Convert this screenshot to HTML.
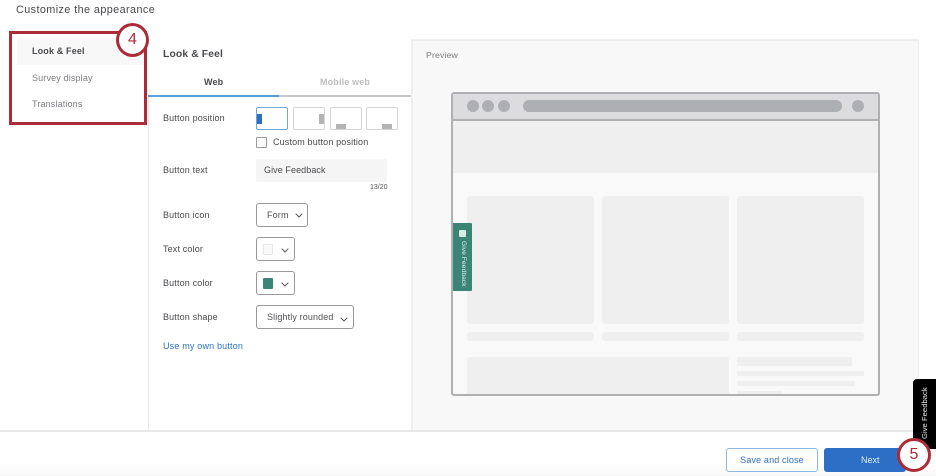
<!DOCTYPE html>
<html>
<head>
<meta charset="utf-8">
<style>
html,body{margin:0;padding:0;background:#fff}
body{width:936px;height:476px;position:relative;overflow:hidden;font-family:"Liberation Sans",sans-serif;color:#525256}
#w{left:0;top:0;width:936px;height:476px;filter:blur(.35px);overflow:hidden}
div,span,a{position:absolute;box-sizing:border-box;white-space:nowrap}
.t{font-size:9px;line-height:12px;letter-spacing:.15px}
.lb{left:163px;color:#4a4a4e}
.pos{top:107px;width:32px;height:23px;border:1px solid #d4d4d6;border-radius:2px;background:#fff}
.sel{left:256px;height:24px;border:1px solid #98989c;border-radius:3px;background:#fff}
.pc{background:#efefef;border-radius:3px}
.dot{width:12px;height:12px;border-radius:50%;background:#aeafb2;top:100px}
.badge{border-radius:50%;background:#fff;border:3px solid #ac2b37;color:#ac2b37;font-size:16px;text-align:center}
</style>
</head>
<body>
<div id="w">
<div style="left:16px;top:3px;font-size:10.8px;line-height:14px;color:#4a4a4e;letter-spacing:.42px">Customize the appearance</div>

<div style="left:148px;top:95px;width:1px;height:337px;background:#e8e8e8"></div>

<div style="left:17px;top:38px;width:127px;height:27px;background:#f8f8f8"></div>
<div class="t" style="left:32px;top:45px;font-weight:bold;color:#4a4a4e">Look &amp; Feel</div>
<div class="t" style="left:32px;top:72px;color:#7d7d82">Survey display</div>
<div class="t" style="left:32px;top:98px;color:#7d7d82">Translations</div>
<div style="left:9px;top:31px;width:138px;height:94px;border:3px solid #ac2b37"></div>
<div class="badge" style="left:116px;top:23px;width:33px;height:34px;line-height:28px">4</div>

<div class="t" style="left:163px;top:49px;font-weight:bold;font-size:10.3px;color:#4a4a4e">Look &amp; Feel</div>
<div class="t" style="left:204px;top:76px;font-weight:bold;color:#4a4a4e">Web</div>
<div class="t" style="left:320px;top:76px;font-weight:bold;color:#bdbdc0">Mobile web</div>
<div style="left:279px;top:95px;width:132px;height:2px;background:#c8c8ca"></div>
<div style="left:148px;top:95px;width:131px;height:2px;background:#5a9fd8"></div>

<div class="t lb" style="top:112px">Button position</div>
<div class="pos" style="left:256px;border-color:#6fa8dc"><span style="left:0;top:6px;width:5px;height:10px;background:#2f6fc2"></span></div>
<div class="pos" style="left:293px"><span style="right:0;top:6px;width:5px;height:10px;background:#b4b4b6"></span></div>
<div class="pos" style="left:330px"><span style="left:5px;bottom:0;width:10px;height:5px;background:#b4b4b6"></span></div>
<div class="pos" style="left:366px"><span style="right:5px;bottom:0;width:10px;height:5px;background:#b4b4b6"></span></div>
<div style="left:256px;top:137px;width:11px;height:11px;border:1px solid #9c9ca0;border-radius:1px;background:#fff"></div>
<div class="t" style="left:273px;top:136px;color:#4a4a4e">Custom button position</div>

<div class="t lb" style="top:164px">Button text</div>
<div style="left:256px;top:159px;width:131px;height:23px;background:#f5f5f5;border-radius:2px"></div>
<div class="t" style="left:264px;top:164px;color:#4a4a4e;letter-spacing:.08px">Give Feedback</div>
<div style="left:370px;top:183px;font-size:7px;line-height:9px;color:#525256">13/20</div>

<div class="t lb" style="top:209px">Button icon</div>
<div class="sel" style="top:203px;width:52px"></div>
<div class="t" style="left:267px;top:209px">Form</div>
<svg style="position:absolute;left:295px;top:213px" width="8" height="5"><path d="M.7.7l3.300 3.300L7.300.7" fill="none" stroke="#55555a" stroke-width="1"/></svg>

<div class="t lb" style="top:243px">Text color</div>
<div class="sel" style="top:237px;width:39px"></div>
<div style="left:263px;top:244px;width:10px;height:11px;background:#fafafa;border:1px solid #e6e6e6;border-radius:1px"></div>
<svg style="position:absolute;left:281px;top:248px" width="8" height="5"><path d="M.7.7l3.300 3.300L7.300.7" fill="none" stroke="#55555a" stroke-width="1"/></svg>

<div class="t lb" style="top:277px">Button color</div>
<div class="sel" style="top:271px;width:39px"></div>
<div style="left:263px;top:278px;width:10px;height:11px;background:#3a8576;border-radius:1px"></div>
<svg style="position:absolute;left:281px;top:282px" width="8" height="5"><path d="M.7.7l3.300 3.300L7.300.7" fill="none" stroke="#55555a" stroke-width="1"/></svg>

<div class="t lb" style="top:311px">Button shape</div>
<div class="sel" style="top:305px;width:98px;height:24px"></div>
<div class="t" style="left:267px;top:311px;letter-spacing:.12px">Slightly rounded</div>
<svg style="position:absolute;left:340px;top:317px" width="8" height="5"><path d="M.7.7l3.300 3.300L7.300.7" fill="none" stroke="#55555a" stroke-width="1"/></svg>

<div class="t" style="left:163px;top:340px;color:#2d72bd;letter-spacing:.18px">Use my own button</div>

<div style="left:411px;top:39px;width:508px;height:393px;background:#f8f8f8;border-top:2px solid #eeeeee;border-left:2px solid #efefef;border-right:1px solid #f0f0f0;border-bottom:2px solid #e6e6e6"></div>
<div class="t" style="left:426px;top:49px;color:#7d7d82;font-size:8.700px">Preview</div>

<div style="left:451px;top:92px;width:429px;height:304px;border:2px solid #b0b0b2;border-radius:3px;background:#f9f9f9"></div>
<div style="left:453px;top:94px;width:425px;height:25px;background:#dcdcde"></div>
<div style="left:453px;top:119px;width:425px;height:2px;background:#b0b0b2"></div>
<div style="left:453px;top:121px;width:425px;height:52px;background:#efefef"></div>
<div class="dot" style="left:467px"></div>
<div class="dot" style="left:482px"></div>
<div class="dot" style="left:498px"></div>
<div style="left:523px;top:100px;width:319px;height:12px;border-radius:6px;background:#aeafb2"></div>
<div class="dot" style="left:852px"></div>

<div class="pc" style="left:467px;top:196px;width:127px;height:128px"></div>
<div class="pc" style="left:602px;top:196px;width:127px;height:128px"></div>
<div class="pc" style="left:737px;top:196px;width:127px;height:128px"></div>
<div class="pc" style="left:467px;top:332px;width:127px;height:9px"></div>
<div class="pc" style="left:602px;top:332px;width:127px;height:9px"></div>
<div class="pc" style="left:737px;top:332px;width:127px;height:9px"></div>
<div class="pc" style="left:467px;top:357px;width:262px;height:37px;border-radius:3px 3px 0 0"></div>
<div style="left:737px;top:357px;width:115px;height:9px;background:#efefef"></div>
<div style="left:737px;top:371px;width:127px;height:5px;background:#efefef"></div>
<div style="left:737px;top:381px;width:118px;height:5px;background:#efefef"></div>
<div style="left:737px;top:391px;width:45px;height:3px;background:#efefef"></div>

<div style="left:453px;top:223px;width:19px;height:68px;background:#3a8576;border-radius:0 1px 1px 0"></div>
<div style="left:459px;top:230px;width:7px;height:7px;background:#d6ebe6;border-radius:1px"></div>
<div style="left:458px;top:241px;width:10px;height:47px;writing-mode:vertical-rl;font-size:6.500px;line-height:10px;color:#e4f1ee;letter-spacing:.15px">Give Feedback</div>

<div style="left:0;top:432px;width:936px;height:44px;background:linear-gradient(#fff 0,#fff 30px,#f8f8f8 44px)"></div>
<div style="left:0;top:430px;width:936px;height:2px;background:#e8e8e8"></div>
<div style="left:726px;top:448px;width:92px;height:24px;border:1px solid #8db8e6;border-radius:3px;background:#fff;color:#2f6fc2;font-size:9px;line-height:22px;text-align:center;letter-spacing:.15px">Save and close</div>
<div style="left:824px;top:448px;width:82px;height:24px;border-radius:3px;background:#2d6ec6;color:#e3edf9;font-size:9px;line-height:24px;text-align:left;padding-left:37px">Next</div>

<div style="left:913px;top:379px;width:23px;height:70px;background:#000;border-radius:4px 0 0 4px"></div>
<div style="left:919px;top:383px;width:11px;height:56px;writing-mode:vertical-rl;transform:rotate(180deg);font-size:7.700px;line-height:11px;color:#e8e8e8">Give Feedback</div>
<div class="badge" style="left:897px;top:438px;width:34px;height:34px;line-height:28px">5</div>
</div>
</body>
</html>
